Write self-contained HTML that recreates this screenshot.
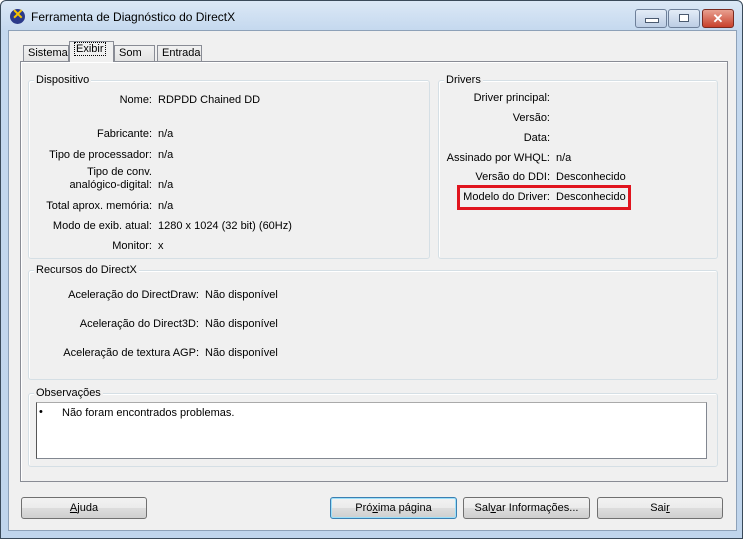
<!DOCTYPE html><html><head><style>
body{margin:0;width:743px;height:539px;overflow:hidden;background:#fff;font-family:"Liberation Sans",sans-serif;font-size:11px;color:#000;position:relative}
.a{position:absolute}
.win{left:0;top:0;width:741px;height:537px;border:1px solid #3a4a5a;border-radius:6px 6px 0 0;background:linear-gradient(#dbe8f6,#c4d8ee 30px,#c0d5ec);}
.client{left:8px;top:30px;width:727px;height:499px;background:#f0f0f0;border:1px solid #8da1b8}
.grp{border:1px solid #d5dfe5;border-radius:3px;box-shadow:inset 1px 1px 0 #fff}
.lbl{background:#f0f0f0;padding:0 2px}
.r{text-align:right}
.btn{border:1px solid #707070;border-radius:3px;background:linear-gradient(#f2f2f2,#ebebeb 50%,#dddddd 51%,#cfcfcf);text-align:center;line-height:20px;height:20px}
.tab{border:1px solid #898c95;border-bottom:none;background:linear-gradient(#f2f2f2,#e3e3e3);height:15px;line-height:15px;padding:0 4px;font-size:11px}
</style></head><body>
<div class="a win"></div>
<div class="a" style="left:10px;top:9px;width:15px;height:15px;border-radius:50%;background:#2b3a8a"></div>
<div class="a" style="left:12px;top:6px;font-size:14px;color:#f5c400;font-weight:bold">✕</div>
<div class="a" style="left:31px;top:10px;font-size:12px">Ferramenta de Diagnóstico do DirectX</div>
<div class="a" style="left:635px;top:9px;width:30px;height:17px;border:1px solid #6d7f99;border-radius:3px;background:linear-gradient(#e3ecf7,#bccde4)"><div class="a" style="left:9px;top:8px;width:12px;height:3px;background:#fff;border:1px solid #4a5a70"></div></div>
<div class="a" style="left:668px;top:9px;width:30px;height:17px;border:1px solid #6d7f99;border-radius:3px;background:linear-gradient(#e3ecf7,#bccde4)"><div class="a" style="left:10px;top:4px;width:8px;height:6px;border:1px solid #4a5a70;background:#fff"></div></div>
<div class="a" style="left:702px;top:9px;width:30px;height:17px;border:1px solid #7a2a20;border-radius:3px;background:linear-gradient(#e8a090,#c8412c);color:#fff;text-align:center;font-weight:bold;font-size:13px;line-height:17px">✕</div>
<div class="a client"></div>
<div class="a" style="left:20px;top:61px;width:706px;height:419px;border:1px solid #898c95;background:#f0f0f0;box-shadow:inset 1px 1px 0 #fff"></div>
<div class="a tab" style="left:23px;top:45px;width:36px">Sistema</div>
<div class="a tab" style="left:114px;top:45px;width:31px">Som</div>
<div class="a tab" style="left:157px;top:45px;width:35px">Entrada</div>
<div class="a tab" style="left:69px;top:41px;height:20px;background:#f0f0f0;border-color:#898c95;width:35px"><span style="border:1px dotted #000;padding:0 1px">Exibir</span></div>
<div class="a grp" style="left:28px;top:80px;width:400px;height:177px"></div>
<div class="a lbl" style="left:34px;top:74px">Dispositivo</div>
<div class="a grp" style="left:438px;top:80px;width:278px;height:177px"></div>
<div class="a lbl" style="left:444px;top:74px">Drivers</div>
<div class="a grp" style="left:28px;top:270px;width:688px;height:108px"></div>
<div class="a lbl" style="left:34px;top:264px">Recursos do DirectX</div>
<div class="a grp" style="left:28px;top:393px;width:688px;height:72px"></div>
<div class="a lbl" style="left:34px;top:387px">Observações</div>
<div class="a" style="left:36px;top:402px;width:669px;height:55px;background:#fff;border:1px solid #828790;border-left-color:#555;border-top-color:#aaa"></div>
<div class="a" style="left:39px;top:406px">•</div>
<div class="a" style="left:62px;top:407px">Não foram encontrados problemas.</div>
<div class="a r" style="left:30px;width:122px;top:94px">Nome:</div>
<div class="a" style="left:158px;top:94px">RDPDD Chained DD</div>
<div class="a r" style="left:30px;width:122px;top:128px">Fabricante:</div><div class="a" style="left:158px;top:128px">n/a</div>
<div class="a r" style="left:30px;width:122px;top:149px">Tipo de processador:</div><div class="a" style="left:158px;top:149px">n/a</div>
<div class="a r" style="left:30px;width:122px;top:166px;line-height:13px">Tipo de conv.<br>analógico-digital:</div><div class="a" style="left:158px;top:179px">n/a</div>
<div class="a r" style="left:30px;width:122px;top:200px">Total aprox. memória:</div><div class="a" style="left:158px;top:200px">n/a</div>
<div class="a r" style="left:30px;width:122px;top:220px">Modo de exib. atual:</div><div class="a" style="left:158px;top:220px">1280 x 1024 (32 bit) (60Hz)</div>
<div class="a r" style="left:30px;width:122px;top:240px">Monitor:</div><div class="a" style="left:158px;top:240px">x</div>
<div class="a r" style="left:440px;width:110px;top:92px">Driver principal:</div>
<div class="a r" style="left:440px;width:110px;top:112px">Versão:</div>
<div class="a r" style="left:440px;width:110px;top:132px">Data:</div>
<div class="a r" style="left:440px;width:110px;top:152px">Assinado por WHQL:</div><div class="a" style="left:556px;top:152px">n/a</div>
<div class="a r" style="left:440px;width:110px;top:171px">Versão do DDI:</div><div class="a" style="left:556px;top:171px">Desconhecido</div>
<div class="a r" style="left:440px;width:110px;top:191px">Modelo do Driver:</div><div class="a" style="left:556px;top:191px">Desconhecido</div>
<div class="a" style="left:457px;top:185px;width:168px;height:19px;border:3px solid #e0141e"></div>
<div class="a r" style="left:30px;width:169px;top:289px">Aceleração do DirectDraw:</div><div class="a" style="left:205px;top:289px">Não disponível</div>
<div class="a r" style="left:30px;width:169px;top:318px">Aceleração do Direct3D:</div><div class="a" style="left:205px;top:318px">Não disponível</div>
<div class="a r" style="left:30px;width:169px;top:347px">Aceleração de textura AGP:</div><div class="a" style="left:205px;top:347px">Não disponível</div>
<div class="a btn" style="left:21px;top:497px;width:124px"><u>A</u>juda</div>
<div class="a btn" style="left:330px;top:497px;width:125px;border-color:#3c7fb1;box-shadow:inset 0 0 0 1px #9ce0fa">Pró<u>x</u>ima página</div>
<div class="a btn" style="left:463px;top:497px;width:125px">Sal<u>v</u>ar Informações...</div>
<div class="a btn" style="left:597px;top:497px;width:124px">Sai<u>r</u></div>
</body></html>
